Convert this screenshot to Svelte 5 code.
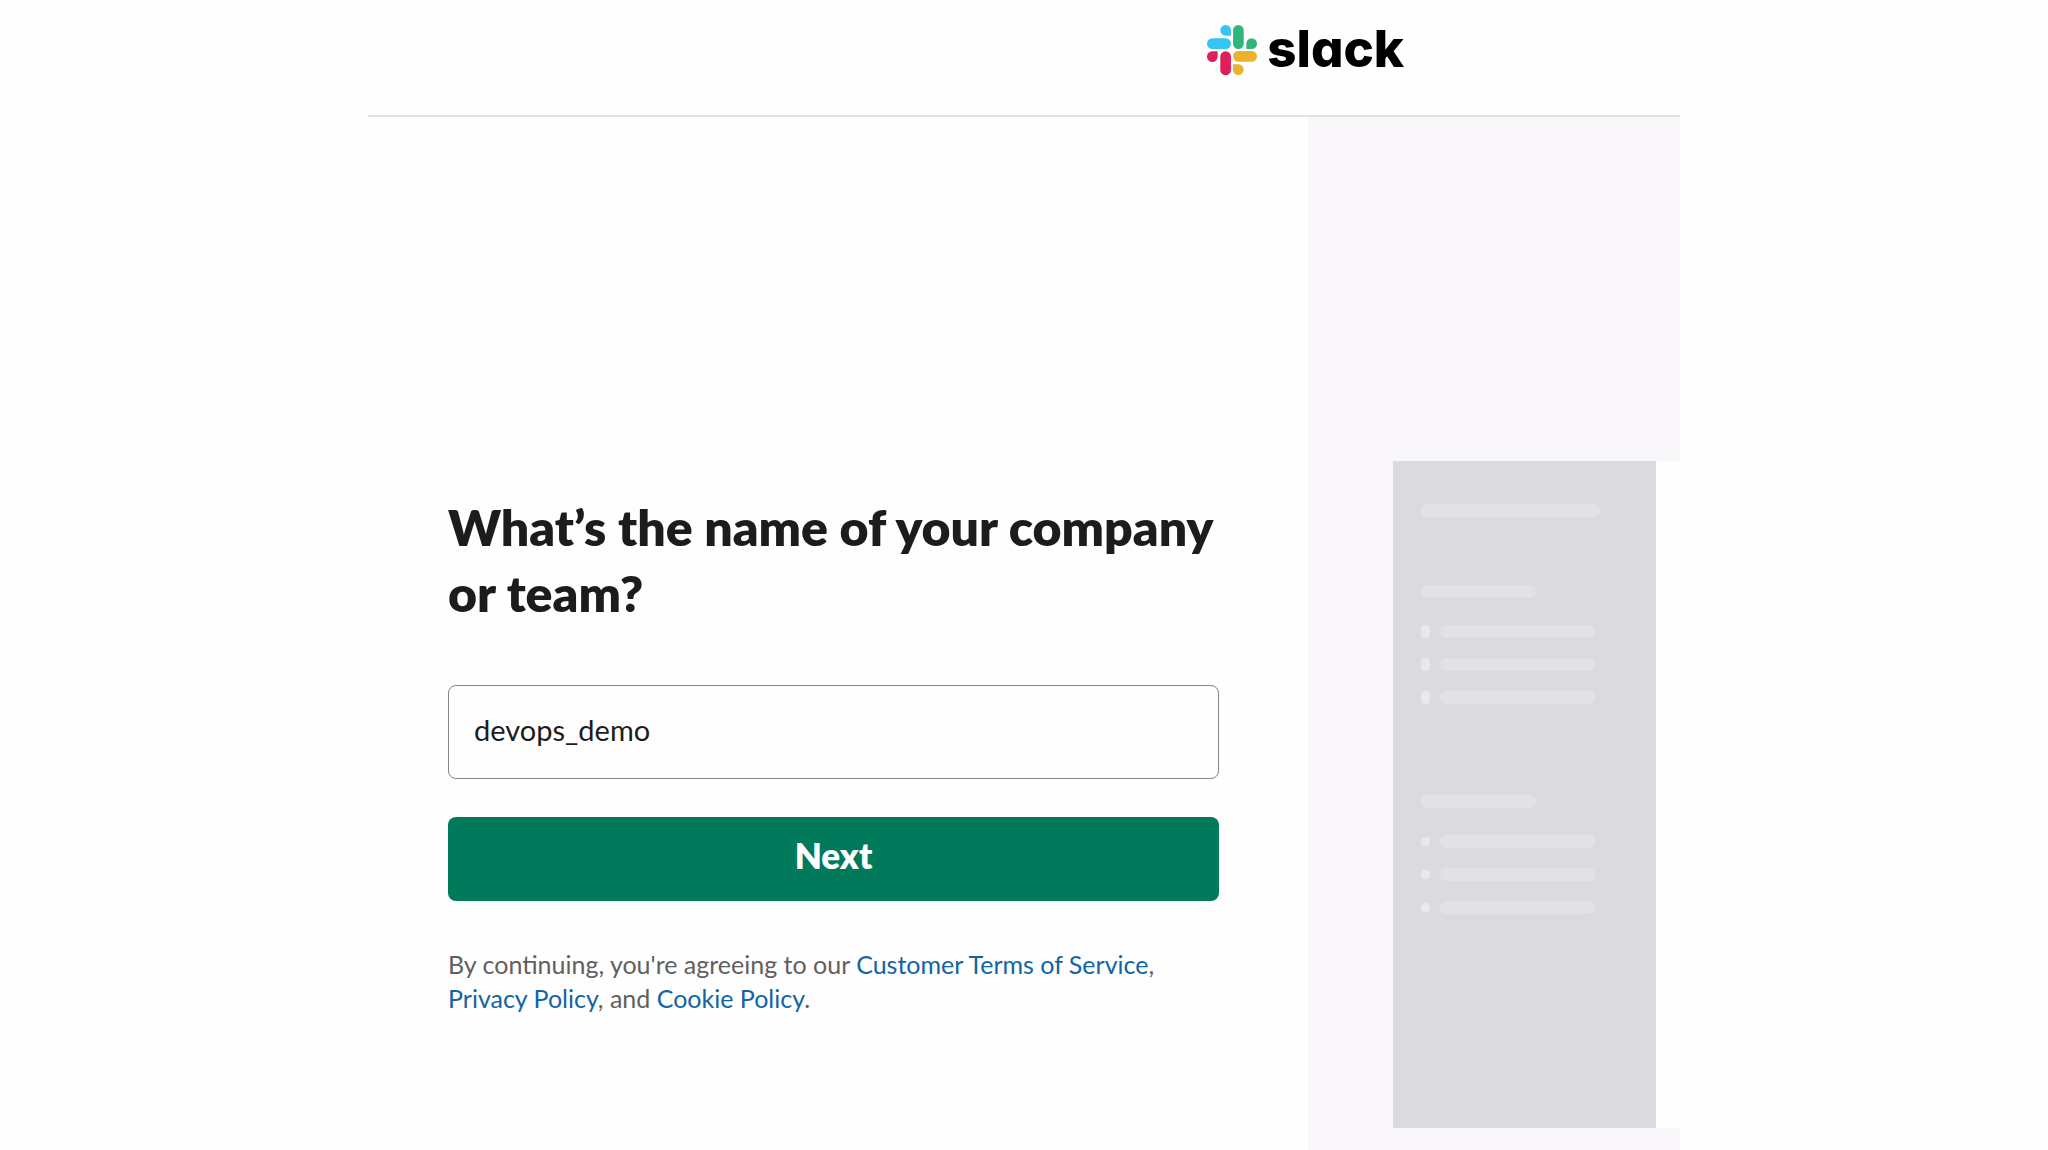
<script>
  let team = $state('devops_demo');

  const groups = [
    { kind: 'tall', rows: 3 },
    { kind: 'small', rows: 3 }
  ];
</script>

<div class="page">
  <header>
    <a class="logo" href="/" aria-label="slack">
      <svg viewBox="0 0 124 124" aria-hidden="true">
        <path fill="#e01e5a" d="M26.4 78.4a13.2 13.2 0 1 1-13.2-13.2h13.2zM33 78.4a13.2 13.2 0 0 1 26.4 0v32.9a13.2 13.2 0 0 1-26.4 0z" />
        <path fill="#36c5f0" d="M46.2 26.4a13.2 13.2 0 1 1 13.2-13.2v13.2zM46.2 33a13.2 13.2 0 0 1 0 26.4h-33a13.2 13.2 0 0 1 0-26.4z" />
        <path fill="#2eb67d" d="M97.6 46.2a13.2 13.2 0 1 1 13.2 13.2H97.6zM91 46.2a13.2 13.2 0 0 1-26.4 0v-33a13.2 13.2 0 0 1 26.4 0z" />
        <path fill="#ecb22e" d="M77.8 97.6a13.2 13.2 0 1 1-13.2 13.2V97.6zM77.8 91a13.2 13.2 0 0 1 0-26.4h33a13.2 13.2 0 0 1 0 26.4z" />
      </svg>
      <span>slack</span>
    </a>
  </header>

  <main>
    <form onsubmit={(e) => e.preventDefault()}>
      <h1><label for="team">What’s the name of your company or team?</label></h1>
      <input id="team" type="text" bind:value={team} autocomplete="off" />
      <button type="submit">Next</button>
      <p>
        By continuing, you're agreeing to our <a href="/terms">Customer Terms of Service</a>,
        <a href="/privacy">Privacy Policy</a>, and <a href="/cookies">Cookie Policy</a>.
      </p>
    </form>

    <aside aria-hidden="true">
      <div class="preview">
        <div class="card">
          <div class="bar title"></div>
          {#each groups as group}
            <div class="group {group.kind}">
              <div class="bar heading"></div>
              {#each Array(group.rows) as _}
                <div class="row">
                  <span class="dot"></span>
                  <span class="bar line"></span>
                </div>
              {/each}
            </div>
          {/each}
        </div>
      </div>
    </aside>
  </main>
</div>

<style>
  :global(body) {
    background: #fefefe;
  }
  * {
    box-sizing: border-box;
  }
  .page {
    display: flex;
    flex-direction: column;
    max-width: 1312px;
    min-height: 100vh;
    margin: 0 auto;
    font-family: Lato, 'Liberation Sans', sans-serif;
    color: #1d1c1d;
  }
  header {
    display: flex;
    justify-content: flex-end;
    padding: 20px 276px 35px 0;
    border-bottom: 2px solid #e2e1e3;
  }
  .logo {
    display: flex;
    align-items: center;
    gap: 10px;
    height: 60px;
    color: #000;
    text-decoration: none;
  }
  .logo svg {
    width: 50px;
    height: 50px;
  }
  .logo span {
    padding-bottom: 2px;
    font: 800 51px/58px Inter, sans-serif;
    font-feature-settings: 'cv11';
  }
  main {
    flex: 1;
    display: grid;
    grid-template-columns: 1fr 372px;
  }
  form {
    display: flex;
    flex-direction: column;
    padding: 377px 64px 80px 80px;
  }
  h1 {
    margin: 0 0 59px;
    font-size: 50px;
    font-weight: 800;
    line-height: 66px;
  }
  input,
  button,
  p {
    max-width: 771px;
  }
  input {
    width: 100%;
    height: 94px;
    margin: 0 0 38px;
    padding: 0 25px 6px;
    border: 1px solid #868486;
    border-radius: 8px;
    background: #fefefe;
    color: #1d1c1d;
    font: 400 29px/36px Lato, sans-serif;
    outline: none;
  }
  button {
    width: 100%;
    height: 84px;
    padding: 0 0 8px;
    border: 0;
    border-radius: 8px;
    background: #007a5a;
    color: #fff;
    font: 800 35px/44px Lato, sans-serif;
    cursor: pointer;
  }
  p {
    margin: 46px 0 0;
    color: #616061;
    font-size: 25px;
    line-height: 34px;
  }
  p a {
    color: #1264a3;
    text-decoration: none;
  }
  aside {
    padding: 344px 0 22px 85px;
    background: #f9f7fa;
  }
  .preview {
    padding-right: 24px;
    background: #fefefe;
  }
  .card {
    height: 667px;
    padding: 43px 56px 0 28px;
    background: #dbdade;
  }
  .bar {
    height: 13px;
    border-radius: 6px;
    background: #e4e1e6;
  }
  .title {
    margin-bottom: 68px;
  }
  .heading {
    width: 115px;
    margin-bottom: 17px;
  }
  .group {
    margin-bottom: 81px;
  }
  .row {
    display: flex;
    align-items: center;
    gap: 10px;
    height: 33px;
    padding-right: 5px;
  }
  .line {
    flex: 1;
  }
  .dot {
    width: 9px;
    height: 9px;
    border-radius: 4px;
    background: #e9e8ec;
  }
  .tall .dot {
    height: 13px;
  }
</style>
